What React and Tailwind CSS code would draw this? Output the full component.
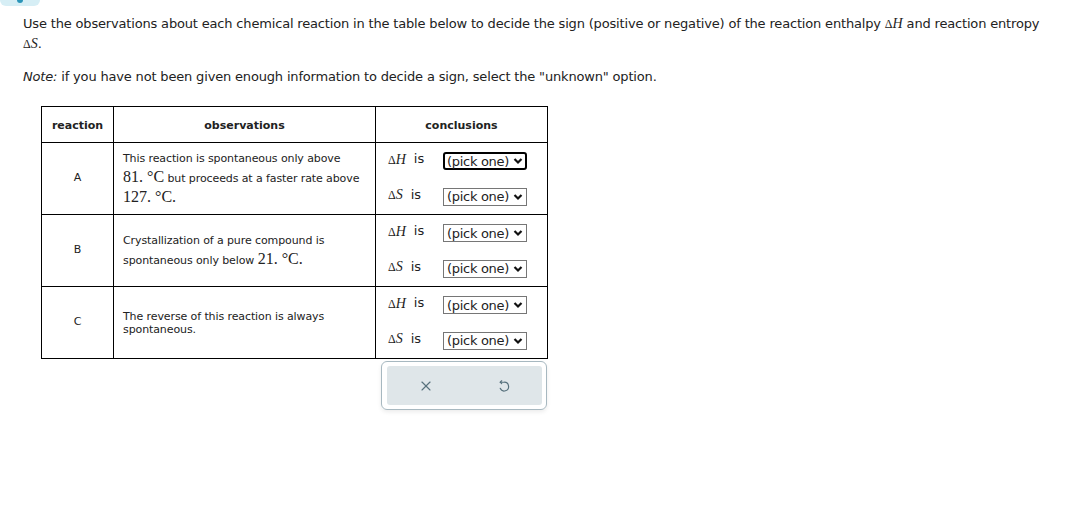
import React from 'react';
import { X } from 'lucide-react';

const sans = { fontFamily: '"DejaVu Sans", Verdana, sans-serif' };
const serif = { fontFamily: '"Liberation Serif", "DejaVu Serif", serif' };

const Num = ({ children }) => (
  <span className="text-[16px] tracking-normal whitespace-nowrap" style={serif}>{children}</span>
);

const Delta = ({ v }) => (
  <span className="text-[14px] whitespace-nowrap tracking-normal" style={serif}>
    <span className="text-[12px]">Δ</span><span className="italic">{v}</span>
  </span>
);

const Pick = ({ focused }) => (
  <div
    className={`flex items-center h-[18px] w-[84px] text-[13px] tracking-[-0.3px] text-[#222] bg-white whitespace-nowrap ${
      focused ? 'border-2 border-black rounded-[3px] pl-[2px] pr-[2px]' : 'border border-[#767676] pl-[3px] pr-[3px]'
    }`}
  >
    <span className="leading-none">(pick one)</span>
    <svg className="ml-auto shrink-0" width="10" height="8" viewBox="0 0 10 8">
      <path d="M1.5 2 L5 5.5 L8.5 2" fill="none" stroke="#111" strokeWidth="2.2" />
    </svg>
  </div>
);

const Conclusion = ({ v, focused, tall }) => (
  <div className={`flex items-center pl-[12px] ${tall ? 'h-[36px]' : 'h-[35px]'}`}>
    <div className="w-[55px] flex items-center gap-[8px] text-[13px] text-[#222] -mt-[4px]">
      <Delta v={v} />
      <span>is</span>
    </div>
    <Pick focused={focused} />
  </div>
);

const UndoIcon = () => (
  <svg width="14" height="14" viewBox="0 0 24 24" fill="none" stroke="currentColor" strokeWidth="2" strokeLinecap="round" strokeLinejoin="round">
    <path d="M8 3 L5.5 5.5 L8 8" />
    <path d="M5.5 5.5 H12 A7.5 7.5 0 1 1 5.5 16" />
  </svg>
);

const rows = [
  {
    id: 'A',
    obs: (
      <>
        This reaction is spontaneous only above <Num>81. °C</Num> but proceeds at a faster rate above <Num>127. °C.</Num>
      </>
    ),
  },
  {
    id: 'B',
    obs: (
      <>
        Crystallization of a pure compound is spontaneous only below <Num>21. °C.</Num>
      </>
    ),
  },
  {
    id: 'C',
    obs: <>The reverse of this reaction is always spontaneous.</>,
  },
];

export default function App() {
  return (
    <div className="relative w-[1071px] h-[513px] bg-white text-[#222] overflow-hidden" style={sans}>
      <div className="absolute left-0 top-0 w-[40px] h-[6px] bg-[#d6eef5] rounded-b-[6px] flex justify-center">
        <div className="w-[6px] h-[3px] bg-[#2a94b8] rounded-b-full" />
      </div>

      <div className="pl-[23px] pt-[14px]">
        <p className="text-[13px] leading-[20px] w-[1030px] tracking-[-0.17px]">
          Use the observations about each chemical reaction in the table below to decide the sign (positive or negative) of the reaction enthalpy <Delta v="H" /> and reaction entropy <Delta v="S" />.
        </p>
        <p className="text-[13px] leading-[20px] mt-[13px] tracking-[-0.17px]">
          <span className="italic">Note:</span> if you have not been given enough information to decide a sign, select the "unknown" option.
        </p>

        <div className="ml-[18px] mt-[19px] w-[506px]">
          <table className="border-collapse w-[506px] table-fixed">
            <colgroup>
              <col className="w-[72px]" />
              <col className="w-[262px]" />
              <col className="w-[172px]" />
            </colgroup>
            <thead>
              <tr className="h-[36px] text-[11px] font-bold">
                <th className="border border-black text-center pt-[3px]">reaction</th>
                <th className="border border-black text-center pt-[3px]">observations</th>
                <th className="border border-black text-center pt-[3px]">conclusions</th>
              </tr>
            </thead>
            <tbody>
              {rows.map((r, i) => (
                <tr key={r.id}>
                  <td className="border border-black text-center text-[11px]">{r.id}</td>
                  <td className="border border-black text-[11px] leading-[18px] pl-[9px] pr-[10px] align-middle tracking-[-0.1px]">
                    <div className={r.id === 'C' ? 'leading-[13px]' : ''}>{r.obs}</div>
                  </td>
                  <td className="border border-black p-0 align-top">
                    <Conclusion v="H" focused={i === 0} tall />
                    <Conclusion v="S" />
                  </td>
                </tr>
              ))}
            </tbody>
          </table>

          <div className="flex justify-end mt-[2px]">
            <div className="w-[166px] h-[49px] border border-[#a7b8c0] rounded-[6px] p-[4px] pl-[5px] shadow-[0_2px_4px_rgba(0,0,0,0.08)]">
              <div className="h-full bg-[#dfe6e9] rounded-[3px] flex items-center justify-around text-[#56707c]">
                <X size={16} strokeWidth={1.7} />
                <UndoIcon />
              </div>
            </div>
          </div>
        </div>
      </div>
    </div>
  );
}
